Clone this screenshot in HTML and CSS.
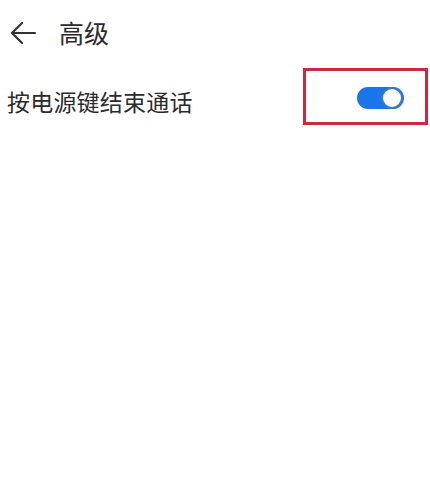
FILE: index.html
```html
<!DOCTYPE html>
<html lang="zh-CN">
<head>
<meta charset="utf-8">
<link rel="stylesheet" href="styles.css">
</head>
<body>
<div class="page">
  <header class="header">
    <svg class="back" width="26" height="24" viewBox="0 0 26 24">
      <path d="M12 2 L2 12 L12 22 M2 12 H25" fill="none" stroke="#333" stroke-width="2.2" stroke-linecap="round" stroke-linejoin="round"/>
    </svg>
    <h1 class="title">高级</h1>
  </header>
  <div class="row">
    <span class="label">按电源键结束通话</span>
    <div class="highlight">
      <div class="switch"><div class="knob"></div></div>
    </div>
  </div>
</div>
</body>
</html>
```
FILE: styles.css
```css
html, body {
  margin: 0;
  padding: 0;
  background: #ffffff;
}
.page {
  width: 430px;
  height: 497px;
  font-family: "Noto Sans CJK SC", "Noto Sans", sans-serif;
  color: #2b2b2b;
}
.header {
  display: flex;
  align-items: center;
  height: 64px;
  padding-left: 10px;
}
.back {
  display: block;
  margin-top: 2px;
}
.title {
  margin: 0 0 0 23px;
  font-size: 25px;
  font-weight: 400;
  line-height: 1;
}
.row {
  display: flex;
  align-items: center;
  justify-content: space-between;
  padding-left: 7px;
  padding-right: 2px;
  margin-top: 4px;
}
.label {
  font-size: 23px;
  line-height: 1;
  letter-spacing: 0.2px;
  margin-top: 10px;
}
.highlight {
  box-sizing: border-box;
  width: 125px;
  height: 57px;
  border: 3px solid #c92b3d;
  display: flex;
  align-items: center;
  justify-content: flex-end;
  padding-right: 21px;
  padding-top: 2px;
}
.switch {
  width: 47px;
  height: 22px;
  border-radius: 11px;
  background: #1a75ea;
  display: flex;
  align-items: center;
  justify-content: flex-end;
  padding-right: 1px;
  box-sizing: border-box;
}
.knob {
  width: 22px;
  height: 22px;
  border-radius: 50%;
  background: #ffffff;
  border: 2px solid #3b78c4;
  box-sizing: border-box;
}
```
